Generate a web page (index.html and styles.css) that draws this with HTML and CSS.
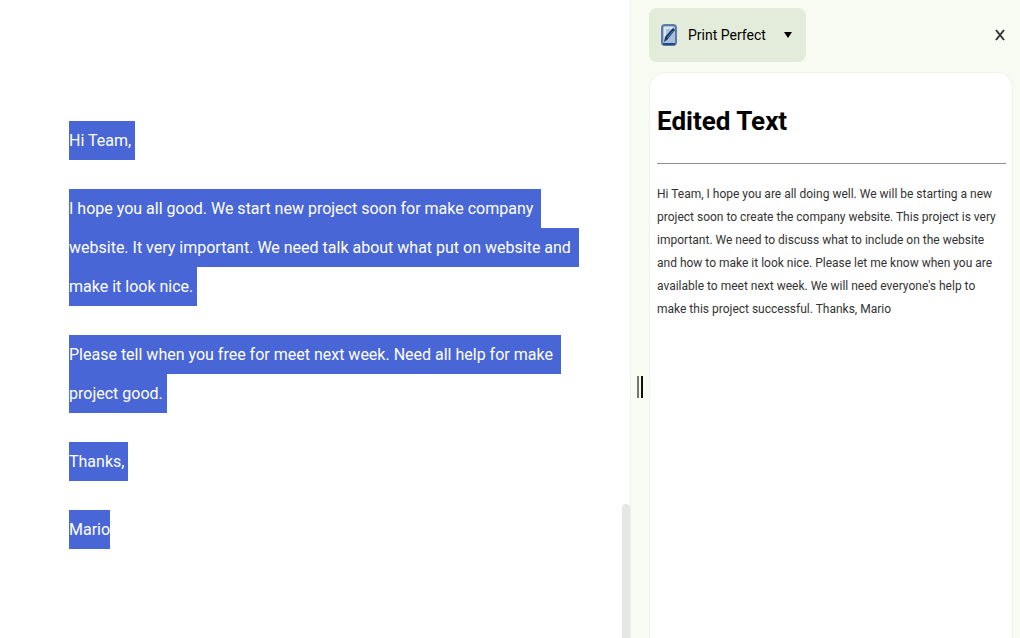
FILE: index.html
```html
<!DOCTYPE html>
<html lang="en">
<head>
    <meta charset="utf-8">
    <title>Print Perfect</title>
    <link rel="stylesheet" href="styles.css">
</head>
<body>
    <main class="document">
        <p><mark>Hi Team,</mark></p>
        <p>
            <mark>I hope you all good. We start new project soon for make company</mark>
            <mark>website. It very important. We need talk about what put on website and</mark>
            <mark>make it look nice.</mark>
        </p>
        <p>
            <mark>Please tell when you free for meet next week. Need all help for make</mark>
            <mark>project good.</mark>
        </p>
        <p><mark>Thanks,</mark></p>
        <p><mark class="last">Mario</mark></p>
        <div class="scroll-thumb"></div>
    </main>

    <div class="resizer"><span class="grip"></span></div>

    <aside class="panel">
        <header class="panel-header">
            <button type="button" class="extension">
                <svg class="logo" width="16" height="22" viewBox="0 0 16 22">
                    <rect x="1" y="1" width="14" height="20" rx="3" fill="#a9bfd9" stroke="#5d7ba6" stroke-width="2"/>
                    <path d="M3 3h9v2H5v12H3z" fill="#d9e6f3"/>
                    <path d="M3 18l1-5 8-9 2 2-8 10z" fill="#17345f"/>
                    <path d="M6 14l6-7" stroke="#4f86c9" stroke-width="1"/>
                    <path d="M2 20h12" stroke="#1f4a8a" stroke-width="2"/>
                </svg>
                <span>Print Perfect</span>
                <svg class="arrow" width="8" height="6" viewBox="0 0 8 6"><path d="M0 0h8L4 6z"/></svg>
            </button>
            <button type="button" class="close" aria-label="Close">
                <svg width="10" height="12" viewBox="0 0 10 12"><path d="M1 1l8 10M9 1L1 11"/></svg>
            </button>
        </header>
        <section class="card">
            <h1>Edited Text</h1>
            <hr>
            <p>
                Hi Team, I hope you are all doing well. We will be starting a new<br>
                project soon to create the company website. This project is very<br>
                important. We need to discuss what to include on the website<br>
                and how to make it look nice. Please let me know when you are<br>
                available to meet next week. We will need everyone's help to<br>
                make this project successful. Thanks, Mario
            </p>
        </section>
    </aside>
</body>
</html>
```
FILE: styles.css
```css
* {box-sizing: border-box;}
body {
    display: flex;
    min-height: 100vh;
    margin: 0;
    background-color: #fff;
    color: #000;
    font-family: Roboto, "Open Sans", sans-serif;}

.document {
    position: relative;
    flex: 1;
    min-width: 0;
    padding: 121px 40px 40px 69px;
    font-size: 16px;
    line-height: 39px;}
.document p {margin: 0 0 29px;}
mark {
    display: block;
    width: fit-content;
    padding-right: 4px;
    background-color: #4866d5;
    color: #fff;
    white-space: nowrap;}
/* wrapped lines keep their selected trailing space */
mark:not(:last-child) {padding-right: 8px;}
mark.last {padding-right: 0;}
.scroll-thumb {
    position: absolute;
    top: 79%;
    right: 0;
    bottom: 0;
    width: 8px;
    border-radius: 4px 4px 0 0;
    background-color: #e6e6e6;}

.resizer {
    display: flex;
    flex-shrink: 0;
    align-items: center;
    justify-content: center;
    width: 18px;
    padding-top: 136px;
    border-left: 1px solid #eef0ea;
    background-color: #f8fbf2;}
.grip {
    width: 6px;
    height: 22px;
    border: solid #111;
    border-width: 0 2px;
    border-left-color: #777;}

.panel {
    display: flex;
    flex-direction: column;
    flex-shrink: 0;
    width: 372px;
    padding: 8px 7px 0 1px;
    background-color: #f8fbf2;}
.panel-header {
    display: flex;
    align-items: center;
    justify-content: space-between;
    margin-bottom: 10px;}
button {
    border: 0;
    background: none;
    font: inherit;
    color: inherit;}
.extension {
    display: flex;
    align-items: center;
    height: 54px;
    padding: 0 14px 0 12px;
    border-radius: 8px;
    background-color: #e3ecdb;
    font-size: 14px;
    line-height: 24px;
    white-space: nowrap;}
.logo {margin-right: 11px;}
.arrow {margin-left: 18px;}
.close {
    display: flex;
    padding: 8px;}
.close path {
    fill: none;
    stroke: #333;
    stroke-width: 2;}

.card {
    flex: 1;
    padding: 26px 6px 0 7px;
    border: 1px solid #f0f3eb;
    border-bottom: 0;
    border-radius: 16px 16px 0 0;
    background-color: #fff;}
h1 {
    margin: 0;
    font-size: 26px;
    line-height: 44px;
    font-weight: 700;}
hr {
    margin: 20px 0 19px;
    border: 0;
    border-top: 1px solid #8c8c8c;}
.card p {
    margin: 0;
    color: #333;
    font-size: 12px;
    line-height: 23px;
    white-space: nowrap;}
```
